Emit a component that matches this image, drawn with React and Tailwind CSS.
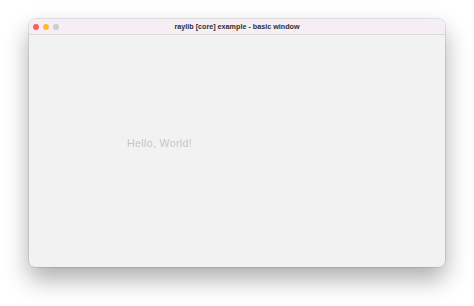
export default function App() {
  return (
    <div className="w-[474px] h-[306px] bg-white pt-[19px] pl-[29px]">
      <div className="w-[416px] h-[248px] rounded-[6px] overflow-hidden flex flex-col bg-[#f2f2f2] shadow-[0_12px_24px_rgba(0,0,0,0.33),0_0_0_0.5px_rgba(0,0,0,0.18)]">
        <div className="relative h-[16px] shrink-0 bg-[#f5eff5] border-b border-[#dcd8dc] flex items-center justify-center">
          <div className="absolute left-[4px] top-[5px] flex gap-[4px]">
            <span className="w-[6px] h-[6px] rounded-full bg-[#fe5f57]" />
            <span className="w-[6px] h-[6px] rounded-full bg-[#febc2e]" />
            <span className="w-[6px] h-[6px] rounded-full bg-[#cfcbd0]" />
          </div>
          <span className="text-[7.2px] font-bold text-[#2e2e2e] leading-none font-['Liberation_Sans',sans-serif]">
            raylib [core] example - basic window
          </span>
        </div>
        <div className="flex-1 pl-[98px] pt-[103px]">
          <span className="block text-[10.5px] leading-none tracking-[0.4px] text-[#c6c6c6] font-['Liberation_Sans',sans-serif]">
            Hello, World!
          </span>
        </div>
      </div>
    </div>
  );
}
